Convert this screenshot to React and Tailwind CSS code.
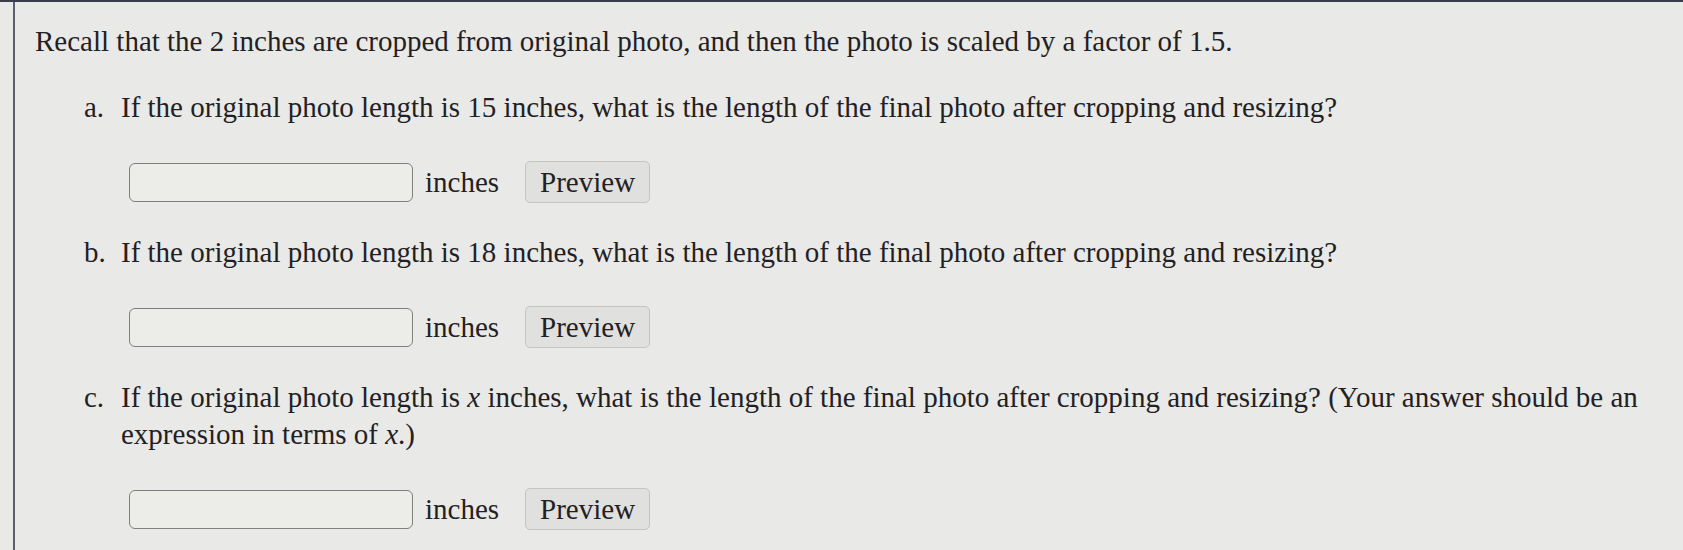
import React from 'react';

const parts = [
  {
    label: 'a.',
    text: <>If the original photo length is 15 inches, what is the length of the final photo after cropping and resizing?</>,
  },
  {
    label: 'b.',
    text: <>If the original photo length is 18 inches, what is the length of the final photo after cropping and resizing?</>,
  },
  {
    label: 'c.',
    text: (
      <>
        If the original photo length is <i>x</i> inches, what is the length of the final photo after cropping and
        resizing? (Your answer should be an expression in terms of <i>x</i>.)
      </>
    ),
  },
];

function AnswerRow() {
  return (
    <div className="flex items-center h-[42px] pl-[8px] mt-[35px]">
      <input
        type="text"
        className="w-[284px] h-[39px] rounded-[6px] border-[1.5px] border-[#7f7f80] bg-[#ecece9] outline-none"
      />
      <span className="ml-[12px]">inches</span>
      <button className="ml-[26px] w-[125px] h-[42px] rounded-[5px] border border-[#c4c4c2] bg-[#e0e0de] text-[#231f24]">
        Preview
      </button>
    </div>
  );
}

export default function App() {
  return (
    <div className="min-h-[550px] bg-[#e9e9e7] border-t-[2px] border-[#3b3d4c] font-['Liberation_Serif',serif] text-[29px] leading-[37px] text-[#231f24]">
      <div className="ml-[13px] min-h-[548px] border-l-[2px] border-[#5b5f70] pl-[20px] pt-[21px] pr-[30px]">
        <p>Recall that the 2 inches are cropped from original photo, and then the photo is scaled by a factor of 1.5.</p>
        <ol className="mt-[29px]">
          {parts.map((p, i) => (
            <li key={p.label} className={i > 0 ? 'mt-[31px]' : ''}>
              <div className="flex">
                <span className="w-[37px] pl-[49px] box-content shrink-0">{p.label}</span>
                <div className="max-w-[1535px]">{p.text}</div>
              </div>
              <div className="pl-[86px]">
                <AnswerRow />
              </div>
            </li>
          ))}
        </ol>
      </div>
    </div>
  );
}
